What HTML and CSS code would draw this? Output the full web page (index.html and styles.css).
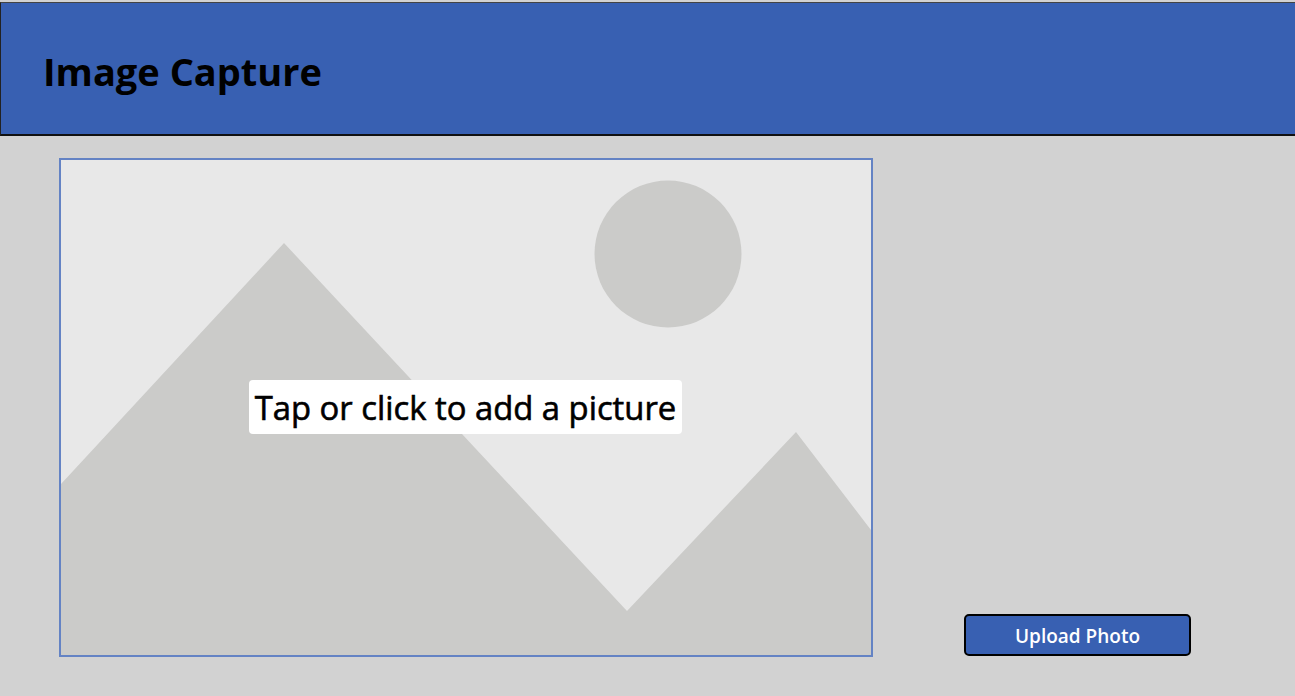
FILE: index.html
```html
<!DOCTYPE html>
<html lang="en">
<head>
    <meta charset="UTF-8">
    <meta name="viewport" content="width=device-width, initial-scale=1.0">
    <title>Image Capture</title>
    <link rel="stylesheet" href="styles.css">
</head>
<body>
    <header class="header">
        <h1>Image Capture</h1>
    </header>
    <main class="content">
        <div class="picture">
            <svg class="placeholder" viewBox="1 1 810 495" aria-hidden="true">
                <rect width="812" height="497" fill="#e8e8e8"/>
                <circle cx="608" cy="95" r="73.5" fill="#cbcbc9"/>
                <path d="M0 326 L224 84 L567 452 L736 273 L811 371 L811 497 L0 497 Z" fill="#cbcbc9"/>
            </svg>
            <span class="picture-label">Tap or click to add a picture</span>
        </div>
        <button class="upload">Upload Photo</button>
    </main>
</body>
</html>
```

FILE: styles.css
```css
* {
    box-sizing: border-box;
}

html,
body {
    height: 100%;
}

body {
    margin: 0;
    overflow: hidden;
    background-color: #d2d2d2;
    font-family: "Open Sans", Arial, sans-serif;
    color: #000000;
}

.header {
    display: flex;
    align-items: center;
    height: 134px;
    margin-top: 2px;
    padding: 4px 0 0 42px;
    background-color: #3860b2;
    border-top: 1px solid #444444;
    border-left: 1px solid #222222;
    border-bottom: 2px solid #111111;
}

.header h1 {
    margin: 0;
    font-size: 38px;
    font-weight: 700;
}

.content {
    display: flex;
    align-items: flex-end;
    padding: 22px 0 0 59px;
}

.picture {
    position: relative;
    width: 814px;
    height: 499px;
    border: 2px solid #6483c4;
}

.placeholder {
    display: block;
    width: 810px;
    height: 495px;
}

.picture-label {
    position: absolute;
    left: 188px;
    top: 220px;
    width: 433px;
    height: 54px;
    display: flex;
    align-items: center;
    justify-content: center;
    background-color: #ffffff;
    border-radius: 4px;
    font-size: 32.8px;
    font-weight: 400;
    -webkit-text-stroke: 0.6px #000000;
    white-space: nowrap;
}

.upload {
    width: 227px;
    height: 42px;
    margin: 0 0 1px 91px;
    padding: 2px 0 0;
    background-color: #3860b2;
    border: 2px solid #000000;
    border-radius: 5px;
    color: #ffffff;
    font-family: inherit;
    font-size: 19px;
    font-weight: 600;
    cursor: pointer;
}
```
